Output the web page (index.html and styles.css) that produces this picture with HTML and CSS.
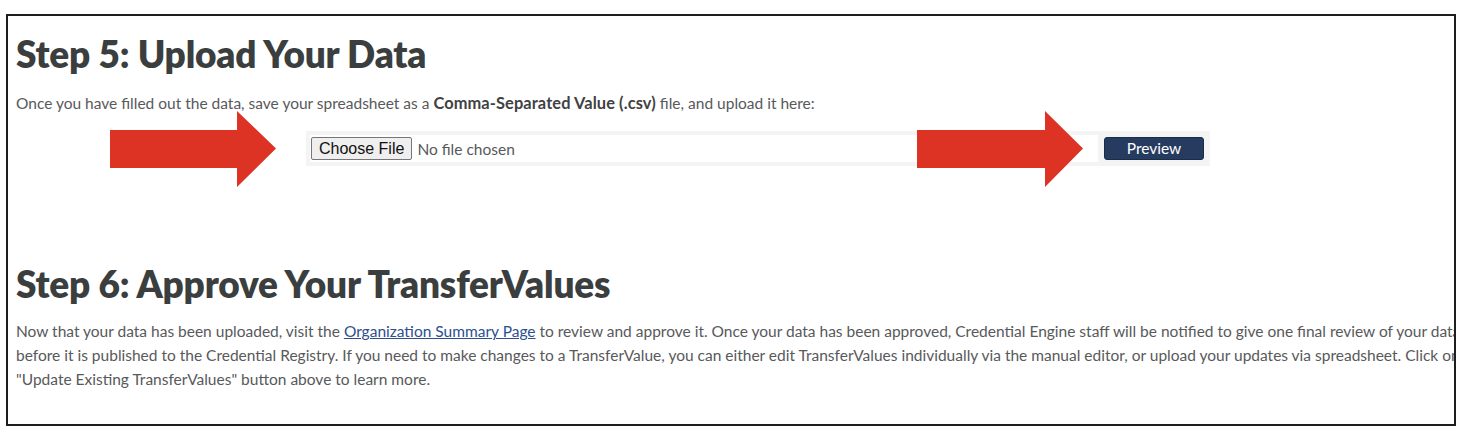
FILE: index.html
```html
<!DOCTYPE html>
<html lang="en">
<head>
<meta charset="utf-8">
<title>Upload and Approve</title>
<link rel="stylesheet" href="styles.css">
</head>
<body>
<div class="frame">
  <section class="step">
    <h2 class="step-title">Step 5: Upload Your Data</h2>
    <p class="step-text">Once you have filled out the data, save your spreadsheet as a <strong>Comma-Separated Value (.csv)</strong> file, and upload it here:</p>
    <div class="upload-panel">
      <div class="file-input">
        <span class="file-button">Choose File</span>
        <span class="file-label">No file chosen</span>
      </div>
      <span class="preview-button">Preview</span>
    </div>
  </section>
  <section class="step step-approve">
    <h2 class="step-title">Step 6: Approve Your TransferValues</h2>
    <p class="step-text step-wide">Now that your data has been uploaded, visit the <a class="link" href="#">Organization Summary Page</a> to review and approve it. Once your data has been approved, Credential Engine staff will be notified to give one final review of your data<br>before it is published to the Credential Registry. If you need to make changes to a TransferValue, you can either edit TransferValues individually via the manual editor, or upload your updates via spreadsheet. Click on the<br>"Update Existing TransferValues" button above to learn more.</p>
  </section>
</div>
<svg class="arrows" width="1474" height="436" viewBox="0 0 1474 436" aria-hidden="true">
  <polygon fill="#dc3324" points="110,130 237,130 237,111 276,148.5 237,187 237,168 110,168"/>
  <polygon fill="#dc3324" points="917,130 1045,130 1045,111 1083,148.5 1045,187 1045,168 917,168"/>
</svg>
</body>
</html>
```

FILE: styles.css
```css
html, body {
  margin: 0;
  padding: 0;
  background: #ffffff;
}
body {
  position: relative;
  width: 1474px;
  height: 436px;
  overflow: hidden;
  font-family: Lato, "Noto Sans", sans-serif;
  color: #58595b;
}
.frame {
  box-sizing: border-box;
  margin: 14px 0 0 6px;
  width: 1450px;
  height: 412px;
  border: 2px solid #1e1e1e;
  padding: 0 0 0 8px;
  overflow: hidden;
}
.step-title {
  margin: 16px 0 0 0;
  font-size: 37px;
  line-height: 44px;
  font-weight: 800;
  color: #3b3e3e;
  letter-spacing: -0.2px;
}
.step-text {
  margin: 15px 0 0 0;
  font-size: 15.5px;
  line-height: 24px;
  color: #58595b;
  white-space: nowrap;
}
.step-text strong {
  font-size: 16.4px;
  font-weight: 700;
  letter-spacing: 0.1px;
  color: #3f4243;
}
.upload-panel {
  display: flex;
  align-items: center;
  margin: 16px 0 0 290px;
  width: 904px;
  height: 35px;
  box-sizing: border-box;
  padding: 4px 6px 4px 4px;
  background: #f4f4f4;
  gap: 6px;
}
.file-input {
  flex: 1;
  display: flex;
  align-items: center;
  height: 27px;
  background: #ffffff;
  padding-left: 1px;
}
.file-button {
  box-sizing: border-box;
  height: 23px;
  padding: 0 7px;
  display: inline-flex;
  align-items: center;
  font-family: "Liberation Sans", Arial, sans-serif;
  font-size: 16px;
  color: #111;
  background: #efefef;
  border: 1px solid #767676;
  border-radius: 2px;
}
.file-label {
  margin-left: 5px;
  font-size: 15.5px;
  color: #58595b;
}
.preview-button {
  box-sizing: border-box;
  width: 100px;
  height: 23px;
  display: inline-flex;
  align-items: center;
  justify-content: center;
  background: #263b60;
  border: 1px solid #1b2c4a;
  border-radius: 3px;
  color: #ffffff;
  font-size: 15.5px;
  padding-bottom: 1px;
}
.step-approve .step-title {
  margin-top: 96px;
}
.step-approve .step-text {
  margin-top: 13px;
}
.link {
  color: #2d4f8f;
  text-decoration: underline;
}
.arrows {
  position: absolute;
  left: 0;
  top: 0;
  pointer-events: none;
}
```
